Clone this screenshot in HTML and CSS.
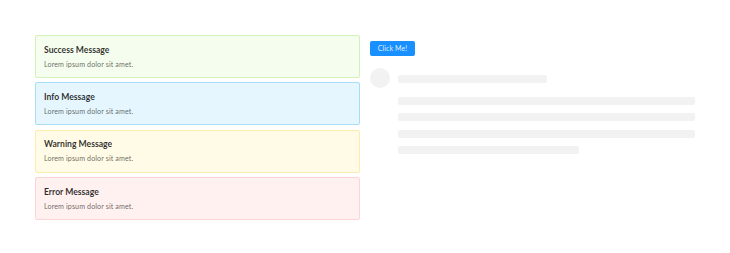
FILE: index.html
```html
<!DOCTYPE html>
<html>
<head>
<meta charset="utf-8">
<link rel="stylesheet" href="styles.css">
</head>
<body>
<div class="page">
  <div class="alerts">
    <div class="alert success">
      <div class="alert-title">Success Message</div>
      <div class="alert-desc">Lorem ipsum dolor sit amet.</div>
    </div>
    <div class="alert info">
      <div class="alert-title">Info Message</div>
      <div class="alert-desc">Lorem ipsum dolor sit amet.</div>
    </div>
    <div class="alert warning">
      <div class="alert-title">Warning Message</div>
      <div class="alert-desc">Lorem ipsum dolor sit amet.</div>
    </div>
    <div class="alert error">
      <div class="alert-title">Error Message</div>
      <div class="alert-desc">Lorem ipsum dolor sit amet.</div>
    </div>
  </div>
  <div class="side">
    <button class="btn">Click Me!</button>
    <div class="skeleton">
      <div class="avatar"></div>
      <div class="sk-content">
        <div class="sk-title"></div>
        <div class="sk-para">
          <div class="sk-line"></div>
          <div class="sk-line"></div>
          <div class="sk-line"></div>
          <div class="sk-line last"></div>
        </div>
      </div>
    </div>
  </div>
</div>
</body>
</html>
```

FILE: styles.css
```css
html, body {
  margin: 0;
  padding: 0;
  background: #ffffff;
}
body {
  font-family: Lato, "Open Sans", sans-serif;
}
.page {
  display: grid;
  grid-template-columns: 325px 325px;
  column-gap: 10px;
  padding: 35px 0 0 35px;
}
.alerts {
  display: flex;
  flex-direction: column;
  gap: 4.4px;
}
.alert {
  box-sizing: border-box;
  height: 43px;
  border: 1px solid;
  border-radius: 2px;
  padding: 7.5px 8px 6px 8px;
}
.alert-title {
  font-size: 8.6px;
  font-weight: 700;
  line-height: 13px;
  color: rgba(0, 0, 0, 0.82);
}
.alert-desc {
  margin-top: 2px;
  font-size: 7.1px;
  letter-spacing: 0.12px;
  line-height: 12px;
  color: rgba(0, 0, 0, 0.62);
}
.success { background: #f5fdee; border-color: #d3f2b8; }
.info { background: #e5f6fe; border-color: #a9dcf6; }
.warning { background: #fffbe6; border-color: #fcedac; }
.error { background: #fff1f0; border-color: #fcd6d2; }

.side {
  display: flex;
  flex-direction: column;
  align-items: flex-start;
}
.btn {
  margin-top: 6px;
  width: 45px;
  height: 15px;
  padding: 0;
  border: 1px solid #1890ff;
  border-radius: 1.5px;
  background: #1890ff;
  color: rgba(255, 255, 255, 0.88);
  font-family: Lato, "Open Sans", sans-serif;
  font-size: 7px;
  letter-spacing: 0.1px;
  line-height: 13px;
}
.skeleton {
  display: flex;
  align-self: stretch;
  margin-top: 12px;
}
.avatar {
  flex: none;
  width: 20px;
  height: 20px;
  border-radius: 50%;
  background: #f2f2f2;
  margin-right: 8px;
}
.sk-content {
  flex: 1;
}
.sk-title {
  margin-top: 7px;
  width: 50%;
  height: 8px;
  border-radius: 2px;
  background: #f2f2f2;
}
.sk-para {
  margin-top: 14px;
}
.sk-line {
  height: 8px;
  border-radius: 2px;
  background: #f2f2f2;
  margin-bottom: 8.3px;
}
.sk-line.last {
  width: 61%;
}
```
